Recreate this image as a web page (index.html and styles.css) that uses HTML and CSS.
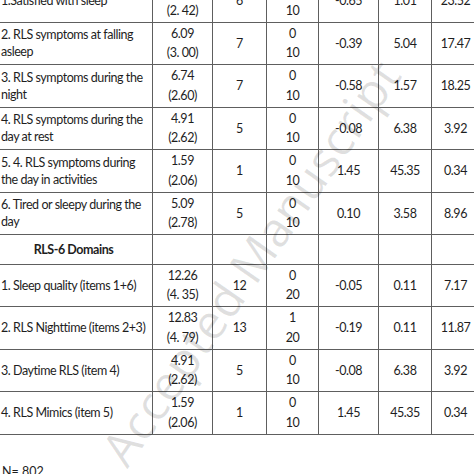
FILE: index.html
```html
<!DOCTYPE html>
<html>
<head>
<meta charset="utf-8">
<link rel="stylesheet" href="styles.css">
</head>
<body>
<div class="page">
  <table class="stats">
    <colgroup>
      <col class="c-item"><col class="c-mean"><col class="c-med"><col class="c-range"><col class="c-skew"><col class="c-kurt"><col class="c-floor">
    </colgroup>
    <tbody>
      <tr class="row">
        <td class="item">1.Satisfied with sleep</td>
        <td class="num two"><span>5.24</span><span>(2. 42)</span></td>
        <td class="num">6</td>
        <td class="num two"><span>0</span><span>10</span></td>
        <td class="num">-0.65</td>
        <td class="num">1.01</td>
        <td class="num">23.52</td>
      </tr>
      <tr class="row">
        <td class="item">2. RLS symptoms at falling asleep</td>
        <td class="num two"><span>6.09</span><span>(3. 00)</span></td>
        <td class="num">7</td>
        <td class="num two"><span>0</span><span>10</span></td>
        <td class="num">-0.39</td>
        <td class="num">5.04</td>
        <td class="num">17.47</td>
      </tr>
      <tr class="row">
        <td class="item">3. RLS symptoms during the night</td>
        <td class="num two"><span>6.74</span><span>(2.60)</span></td>
        <td class="num">7</td>
        <td class="num two"><span>0</span><span>10</span></td>
        <td class="num">-0.58</td>
        <td class="num">1.57</td>
        <td class="num">18.25</td>
      </tr>
      <tr class="row">
        <td class="item">4. RLS symptoms during the day at rest</td>
        <td class="num two"><span>4.91</span><span>(2.62)</span></td>
        <td class="num">5</td>
        <td class="num two"><span>0</span><span>10</span></td>
        <td class="num">-0.08</td>
        <td class="num">6.38</td>
        <td class="num">3.92</td>
      </tr>
      <tr class="row">
        <td class="item">5. 4. RLS symptoms during the day in activities</td>
        <td class="num two"><span>1.59</span><span>(2.06)</span></td>
        <td class="num">1</td>
        <td class="num two"><span>0</span><span>10</span></td>
        <td class="num">1.45</td>
        <td class="num">45.35</td>
        <td class="num">0.34</td>
      </tr>
      <tr class="row">
        <td class="item">6. Tired or sleepy during the day</td>
        <td class="num two"><span>5.09</span><span>(2.78)</span></td>
        <td class="num">5</td>
        <td class="num two"><span>0</span><span>10</span></td>
        <td class="num">0.10</td>
        <td class="num">3.58</td>
        <td class="num">8.96</td>
      </tr>
      <tr class="section">
        <td class="head">RLS-6 Domains</td>
        <td></td><td></td><td></td><td></td><td></td><td></td>
      </tr>
      <tr class="row">
        <td class="item">1. Sleep quality (items 1+6)</td>
        <td class="num two"><span>12.26</span><span>(4. 35)</span></td>
        <td class="num">12</td>
        <td class="num two"><span>0</span><span>20</span></td>
        <td class="num">-0.05</td>
        <td class="num">0.11</td>
        <td class="num">7.17</td>
      </tr>
      <tr class="row">
        <td class="item">2. RLS Nighttime (items 2+3)</td>
        <td class="num two"><span>12.83</span><span>(4. 79)</span></td>
        <td class="num">13</td>
        <td class="num two"><span>1</span><span>20</span></td>
        <td class="num">-0.19</td>
        <td class="num">0.11</td>
        <td class="num">11.87</td>
      </tr>
      <tr class="row">
        <td class="item">3. Daytime RLS (item 4)</td>
        <td class="num two"><span>4.91</span><span>(2.62)</span></td>
        <td class="num">5</td>
        <td class="num two"><span>0</span><span>10</span></td>
        <td class="num">-0.08</td>
        <td class="num">6.38</td>
        <td class="num">3.92</td>
      </tr>
      <tr class="row">
        <td class="item">4. RLS Mimics (item 5)</td>
        <td class="num two"><span>1.59</span><span>(2.06)</span></td>
        <td class="num">1</td>
        <td class="num two"><span>0</span><span>10</span></td>
        <td class="num">1.45</td>
        <td class="num">45.35</td>
        <td class="num">0.34</td>
      </tr>
    </tbody>
  </table>
  <p class="note">N= 802</p>
  <div class="watermark">Accepted Manuscript</div>
</div>
</body>
</html>
```
FILE: styles.css
```css
html, body {
  margin: 0;
  padding: 0;
  background: #fff;
  overflow: hidden;
}
body {
  width: 474px;
  height: 474px;
  font-family: Lato, "Open Sans", sans-serif;
  color: #1e1e1e;
}
.page {
  position: relative;
  width: 474px;
  height: 474px;
  overflow: hidden;
}
.stats {
  border-collapse: collapse;
  table-layout: fixed;
  width: 485px;
  margin-top: -21px;
  margin-left: -6px;
  font-size: 12.5px;
  letter-spacing: -0.45px;
}
.c-item { width: 158px; }
.c-mean { width: 60px; }
.c-med { width: 54px; }
.c-range { width: 52px; }
.c-skew { width: 60px; }
.c-kurt { width: 53px; }
.c-floor { width: 48px; }
.stats td {
  border: 1.5px solid #5e5e5e;
  padding: 0;
  vertical-align: middle;
}
.row td { height: 41.5px; }
.section td { height: 28.5px; }
.item {
  padding-left: 6px !important;
  padding-right: 2px !important;
  line-height: 17px;
  text-align: left;
}
.head {
  text-align: center;
  font-weight: bold;
  font-size: 12.5px;
}
.num {
  text-align: center;
}
.two span {
  display: block;
  line-height: 19.5px;
}
.note {
  margin: 29px 0 0 2px;
  font-size: 12.5px;
}
.watermark {
  position: absolute;
  left: 250px;
  top: 262px;
  transform: translate(-50%, -50%) rotate(-55deg);
  font-size: 48px;
  white-space: nowrap;
  color: rgba(0, 0, 0, 0.12);
  font-family: "Open Sans", Lato, sans-serif;
  letter-spacing: 0.5px;
}
```
